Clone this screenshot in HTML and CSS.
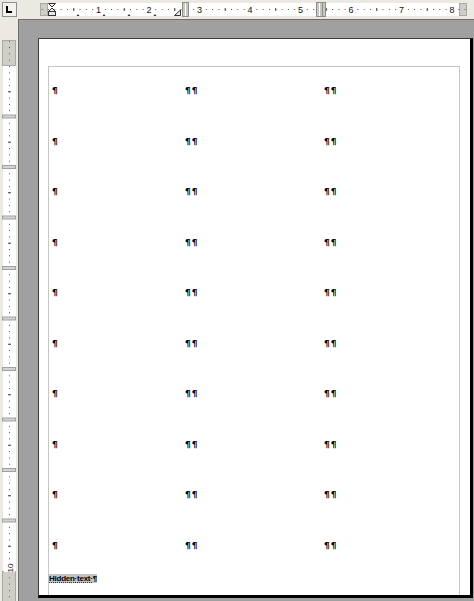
FILE: index.html
```html
<!DOCTYPE html>
<html>
<head>
<meta charset="utf-8">
<link rel="stylesheet" href="styles.css">
</head>
<body>
<div class="topbar">
<svg class="hruler" width="474" height="19" viewBox="0 0 474 19">
<defs>
<pattern id="hdots" x="48" y="0" width="6.3125" height="19" patternUnits="userSpaceOnUse"><rect x="0" y="9" width="1" height="1" fill="#555"/></pattern>
<pattern id="hhalf" x="48" y="0" width="25.25" height="19" patternUnits="userSpaceOnUse"><rect x="0" y="8" width="1" height="3" fill="#444"/></pattern>
</defs>
<rect x="2.5" y="2.5" width="14" height="14" fill="#f4f3ee" stroke="#8e8e8e"/>
<path d="M7 6v6h5" stroke="#000" stroke-width="2" fill="none"/>
<rect x="40" y="3" width="427" height="13" fill="#fff"/>
<rect x="40.5" y="3.5" width="7" height="12" fill="#cfcdc6" stroke="#a8a8a8"/>
<rect x="459.5" y="3.5" width="7" height="12" fill="#cfcdc6" stroke="#a8a8a8"/>
<rect x="40" y="3" width="427" height="13" fill="url(#hdots)"/>
<rect x="50" y="3" width="410" height="13" fill="url(#hhalf)"/>
<g class="rnums">
<rect x="95" y="4" width="7" height="11" fill="#fff"/><text x="98.5" y="13">1</text>
<rect x="145.5" y="4" width="7" height="11" fill="#fff"/><text x="149" y="13">2</text>
<rect x="196" y="4" width="7" height="11" fill="#fff"/><text x="199.5" y="13">3</text>
<rect x="246.5" y="4" width="7" height="11" fill="#fff"/><text x="250" y="13">4</text>
<rect x="297" y="4" width="7" height="11" fill="#fff"/><text x="300.5" y="13">5</text>
<rect x="347.5" y="4" width="7" height="11" fill="#fff"/><text x="351" y="13">6</text>
<rect x="398" y="4" width="7" height="11" fill="#fff"/><text x="401.5" y="13">7</text>
<rect x="448.5" y="4" width="7" height="11" fill="#fff"/><text x="452" y="13">8</text>
</g>
<g fill="#333">
<polygon points="76.5,16 79.5,16 78,14"/>
<polygon points="102.5,16 105.5,16 104,14"/>
<polygon points="127.5,16 130.5,16 129,14"/>
<polygon points="153.5,16 156.5,16 155,14"/>
</g>
<g fill="#ececec" stroke="#333" stroke-width="1">
<polygon points="48.5,3.5 55.5,3.5 52,7"/>
<polygon points="52,8 48.5,11.5 55.5,11.5"/>
<rect x="48.5" y="11.5" width="7" height="4"/>
<polygon points="174.5,15.5 180.5,15.5 180.5,10"/>
</g>
<g>
<rect x="182.5" y="2.5" width="6" height="14" fill="#c9c7c0" stroke="#8c8c8c"/>
<line x1="185.5" y1="3" x2="185.5" y2="16" stroke="#fff"/>
<rect x="316.5" y="2.5" width="9" height="14" fill="#c9c7c0" stroke="#8c8c8c"/>
<line x1="319.5" y1="3" x2="319.5" y2="16" stroke="#fff"/>
<line x1="322.5" y1="3" x2="322.5" y2="16" stroke="#8c8c8c"/>
</g>
</svg>
</div>
<div class="main">
<div class="vside">
<svg class="vruler" width="18" height="582" viewBox="0 0 18 582">
<defs>
<pattern id="vdots" x="0" y="47" width="18" height="6.3125" patternUnits="userSpaceOnUse"><rect x="9" y="0" width="1" height="1" fill="#555"/></pattern>
<pattern id="vhalf" x="0" y="47" width="18" height="25.25" patternUnits="userSpaceOnUse"><rect x="8" y="0" width="3" height="1" fill="#444"/></pattern>
</defs>
<rect x="2.5" y="21.5" width="13" height="25" fill="#cfcdc6" stroke="#a8a8a8"/>
<rect x="3" y="47" width="13" height="505" fill="#fff"/>
<rect x="2.5" y="552.5" width="13" height="32" fill="#cfcdc6" stroke="#a8a8a8"/>
<rect x="3" y="22" width="13" height="562" fill="url(#vdots)"/>
<rect x="3" y="49" width="13" height="503" fill="url(#vhalf)"/>
<g fill="#d6d4cd" stroke="#a0a0a0">
<rect x="2.5" y="96" width="13" height="3"/>
<rect x="2.5" y="146.5" width="13" height="3"/>
<rect x="2.5" y="197" width="13" height="3"/>
<rect x="2.5" y="247.5" width="13" height="3"/>
<rect x="2.5" y="298" width="13" height="3"/>
<rect x="2.5" y="348.5" width="13" height="3"/>
<rect x="2.5" y="399" width="13" height="3"/>
<rect x="2.5" y="449.5" width="13" height="3"/>
<rect x="2.5" y="500" width="13" height="3"/>
</g>
<rect x="4" y="544" width="11" height="9" fill="#fff"/>
<text class="vnum" x="0" y="0" transform="translate(12.5 549) rotate(-90)">10</text>
</svg>
</div>
<div class="workspace">
<div class="page">
<div class="textarea">
<div class="table">
<div class="cell">¶</div><div class="cell pair">¶¶</div><div class="cell pair">¶¶</div>
<div class="cell">¶</div><div class="cell pair">¶¶</div><div class="cell pair">¶¶</div>
<div class="cell">¶</div><div class="cell pair">¶¶</div><div class="cell pair">¶¶</div>
<div class="cell">¶</div><div class="cell pair">¶¶</div><div class="cell pair">¶¶</div>
<div class="cell">¶</div><div class="cell pair">¶¶</div><div class="cell pair">¶¶</div>
<div class="cell">¶</div><div class="cell pair">¶¶</div><div class="cell pair">¶¶</div>
<div class="cell">¶</div><div class="cell pair">¶¶</div><div class="cell pair">¶¶</div>
<div class="cell">¶</div><div class="cell pair">¶¶</div><div class="cell pair">¶¶</div>
<div class="cell">¶</div><div class="cell pair">¶¶</div><div class="cell pair">¶¶</div>
<div class="cell">¶</div><div class="cell pair">¶¶</div><div class="cell pair">¶¶</div>
</div>
<div class="hiddenline"><span class="hidden">Hidden·text·¶</span></div>
</div>
</div>
</div>
</div>
</body>
</html>
```
FILE: styles.css
```css
html, body {
  margin: 0;
  padding: 0;
}
body {
  width: 474px;
  height: 601px;
  overflow: hidden;
  background: #ebe9e1;
  display: flex;
  flex-direction: column;
  font-family: "Liberation Sans", Arial, sans-serif;
}
.topbar {
  height: 19px;
  flex: none;
}
.hruler, .vruler {
  display: block;
}
.rnums text {
  font: 9px "Liberation Sans", Arial, sans-serif;
  fill: #111;
  text-anchor: middle;
}
.vnum {
  font: 8px "Liberation Sans", Arial, sans-serif;
  fill: #111;
  text-anchor: middle;
}
.main {
  flex: 1;
  display: flex;
  min-height: 0;
}
.vside {
  width: 18px;
  flex: none;
}
.workspace {
  flex: 1;
  background: #a0a0a0;
  border-top: 1px solid #6e6e6e;
  border-left: 1px solid #6e6e6e;
  padding: 18px 0 0 19px;
  overflow: hidden;
}
.page {
  width: 431px;
  height: 556px;
  background: #fff;
  border-top: 1px solid #3a3a3a;
  border-left: 1px solid #3a3a3a;
  border-right: 3px solid #000;
  border-bottom: 3px solid #000;
  display: flex;
  flex-direction: column;
  overflow: hidden;
}
.textarea {
  margin: 27px 0 0 9px;
  width: 412px;
  flex: 1;
  box-shadow: inset 1px 1px 0 #c6c6c6, inset -1px 0 0 #c6c6c6;
}
.table {
  display: grid;
  grid-template-columns: 133px 139px 1fr;
  grid-auto-rows: 50.5px;
  padding-left: 4px;
  align-items: center;
}
.cell {
  font: bold 9px/10px "DejaVu Sans", "Liberation Sans", sans-serif;
  color: #000;
}
.pair {
  letter-spacing: 1px;
}
.hiddenline {
  height: 9px;
  line-height: 9px;
  padding-left: 1px;
}
.hidden {
  font-size: 8px;
  font-weight: bold;
  letter-spacing: -0.25px;
  color: #000;
  background: #c2c2c2;
  text-decoration: underline dotted #333;
}
```
